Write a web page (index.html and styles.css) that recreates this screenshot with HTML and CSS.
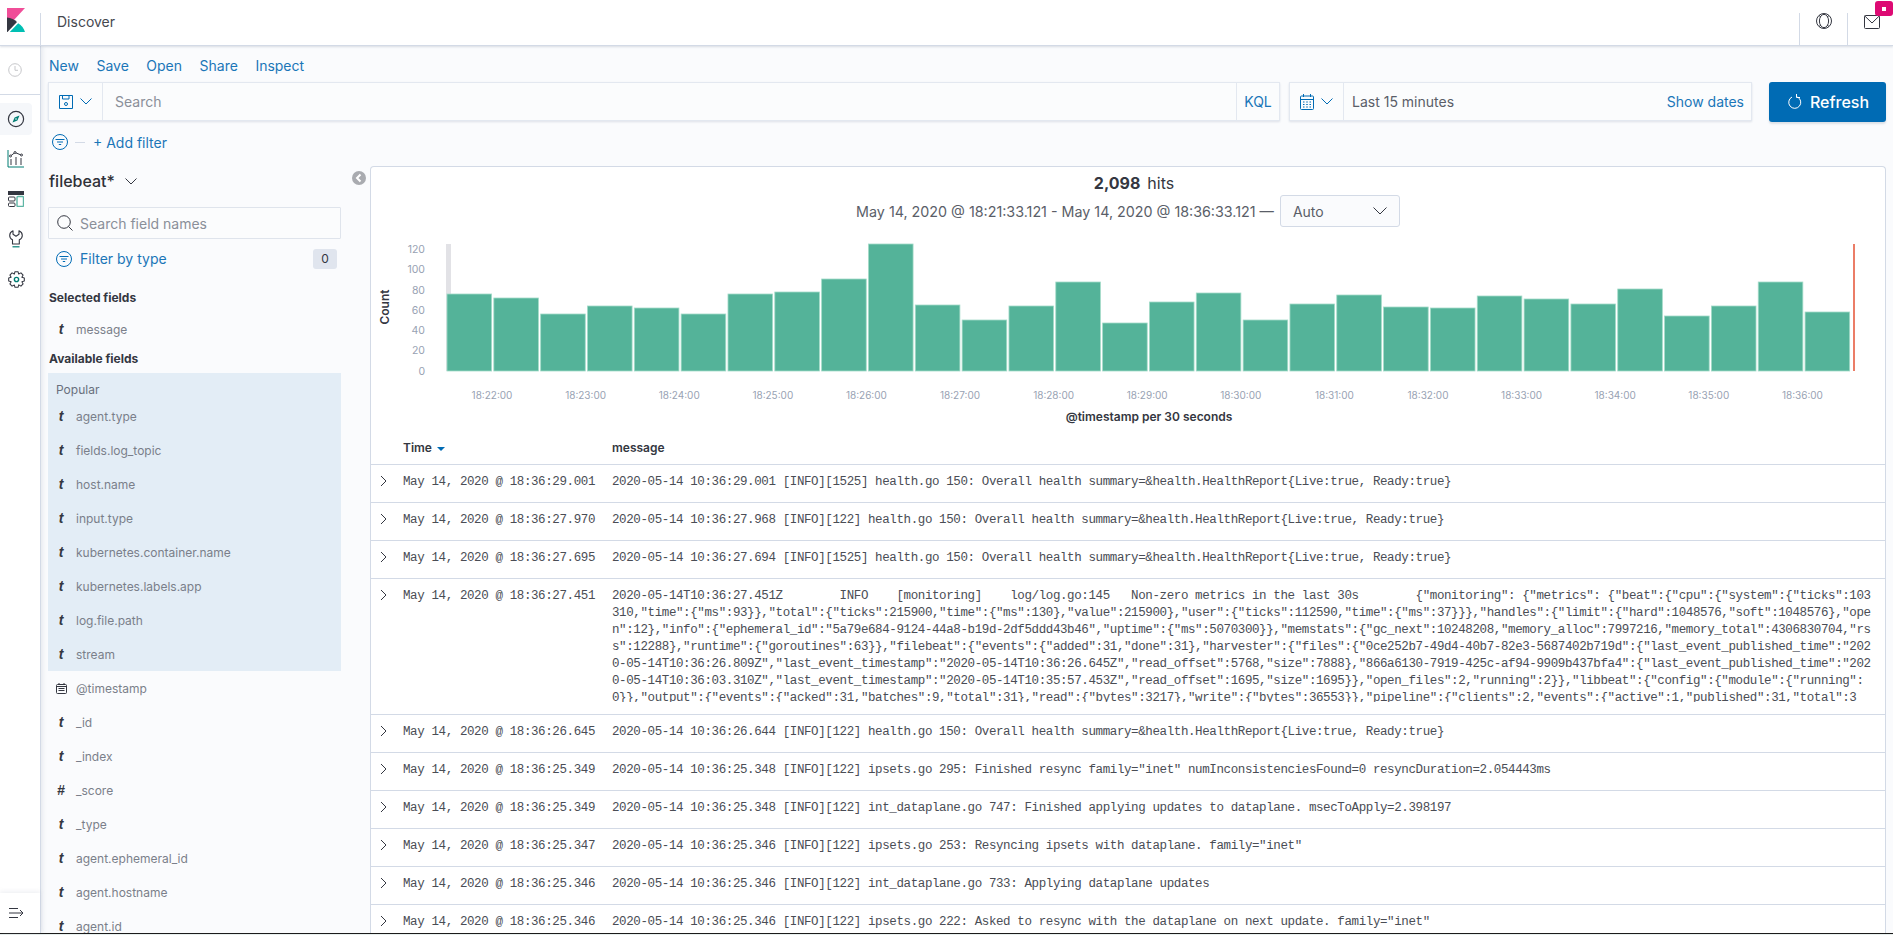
FILE: index.html
```html
<!DOCTYPE html>
<html lang="en">
<head>
<meta charset="utf-8">
<title>Discover - Kibana</title>
<link rel="stylesheet" href="styles.css">
</head>
<body>
<div class="app">
  <header class="topbar">
    <div class="logo-cell">
      <svg class="logo" width="18" height="24" viewBox="0 0 18 24"><path fill="#f04e98" d="M0 0H18L0 19.5Z"/><path fill="#343741" d="M0 9.5C4 9.8 7.5 11.5 10 14L0 24.5Z"/><path fill="#00bfb3" d="M11.2 15.2C14.6 17.3 17 20.4 18 24H2.8Z"/></svg>
    </div>
    <div class="crumb">Discover</div>
    <div class="head-cell">
      <svg width="18" height="18" viewBox="0 0 18 18" fill="none" stroke="#343741"><circle cx="9" cy="9" r="7.5"/><ellipse cx="9" cy="9" rx="4.6" ry="6.6"/><path d="M4 3.5 6 5M14 3.5 12 5M4 14.5 6 13M14 14.5 12 13"/></svg>
    </div>
    <div class="head-cell head-last">
      <svg width="16" height="14" viewBox="0 0 16 14" fill="none" stroke="#343741"><rect x=".5" y=".5" width="15" height="13" rx="1"/><path d="M.8 1 8 8l7.2-7"/></svg>
      <span class="badge"><i></i></span>
    </div>
  </header>

  <div class="workspace">
    <nav class="sidenav">
      <div class="recent">
        <svg width="14" height="14" viewBox="0 0 14 14" fill="none" stroke="#c6c7ca"><circle cx="7" cy="7" r="6.3"/><path d="M7 3v4.3h3"/></svg>
      </div>
      <div class="nav-list">
        <a class="nav-item is-active">
          <svg width="18" height="18" viewBox="0 0 18 18" fill="none"><circle cx="9" cy="9" r="7.6" stroke="#343741" stroke-width="1.2"/><path d="M5.5 12.5 7.6 7.6 12.5 5.5 10.4 10.4Z" fill="#017d73"/><circle cx="9" cy="9" r=".8" fill="#fff"/></svg>
        </a>
        <a class="nav-item">
          <svg width="18" height="18" viewBox="0 0 18 18" fill="none"><path d="M1 0v17h16" stroke="#017d73"/><path d="M4 15V9M9 15V7M14 15V8" stroke="#343741"/><path d="M3.5 6 8 2.5l6 2.5" stroke="#343741"/><circle cx="3.5" cy="6" r="1" fill="#fff" stroke="#343741"/><circle cx="8" cy="2.5" r="1" fill="#fff" stroke="#343741"/><circle cx="14.5" cy="5" r="1" fill="#fff" stroke="#343741"/></svg>
        </a>
        <a class="nav-item">
          <svg width="16" height="16" viewBox="0 0 16 16" fill="none"><rect x=".5" y=".5" width="15" height="3" fill="#343741" stroke="#343741"/><rect x="9" y="5.5" width="6.5" height="10" rx="1" stroke="#5fb6a5" stroke-width="1.4"/><rect x=".5" y="6" width="6.5" height="4" rx="1" stroke="#343741"/><rect x=".5" y="12" width="6.5" height="3.5" rx="1" stroke="#343741"/></svg>
        </a>
        <a class="nav-item">
          <svg width="14" height="18" viewBox="0 0 14 18" fill="none"><path d="M4 .8C1.8 1.8.7 3.5.7 5.4c0 2 1.2 3.5 2.8 4.3V14h6.8V9.7c1.800-.8 3-2.300 3-4.300 0-1.900-1.100-3.600-3.300-4.600v3.500L7 6.200 4 4.300Z" stroke="#343741" stroke-width="1.100" stroke-linejoin="round"/><path d="M3.500 16.800h7" stroke="#017d73" stroke-width="1.200"/></svg>
        </a>
        <a class="nav-item">
          <svg width="17" height="17" viewBox="0 0 16 16" fill="none"><path stroke="#343741" stroke-linejoin="round" d="M5.940 2.900 6.570.64H9.430L10.060 2.900 12.190 1.780 14.220 3.810 13.060 5.850 15.360 6.570V9.430L13.100 10.060 14.220 12.190 12.190 14.220 10.150 13.060 9.430 15.360H6.570L5.940 13.100 3.810 14.220 1.780 12.190 2.940 10.150.64 9.430V6.570L2.900 5.940 1.780 3.810 3.810 1.780Z"/><circle cx="8" cy="8" r="2" stroke="#017d73" stroke-width="1.300"/></svg>
        </a>
      </div>
      <div class="nav-toggle">
        <svg width="15" height="10" viewBox="0 0 15 10" fill="none" stroke="#343741"><path d="M0 .5h9M0 5h14M0 9.500h9M11 2l3 3-3 3"/></svg>
      </div>
    </nav>

    <main class="main">
      <div class="menu">
        <a>New</a><a>Save</a><a>Open</a><a>Share</a><a>Inspect</a>
      </div>

      <div class="query-row">
        <div class="searchbar">
          <div class="prepend">
            <svg width="14" height="14" viewBox="0 0 14 14" fill="none" stroke="#006bb4"><path d="M.5.5h13v13H.500Z"/><path d="M3.500.5v3.500h6.500V.5"/><circle cx="7" cy="9" r="1.500"/></svg>
            <svg class="chev" width="12" height="7" viewBox="0 0 12 7" fill="none" stroke="#006bb4"><path d="M.5.5 6 6l5.500-5.500"/></svg>
          </div>
          <div class="search-text">Search</div>
          <div class="kql">KQL</div>
        </div>
        <div class="datebar">
          <div class="prepend prepend-date">
            <svg width="14" height="16" viewBox="0 0 14 16" fill="none" stroke="#006bb4"><rect x=".5" y="2" width="13" height="13.500" rx="1"/><path d="M.5 5.500h13M3.500 0v3M10.500 0v3M3 8h1.500M6.250 8h1.500M9.500 8H11M3 10.500h1.500M6.250 10.500h1.500M9.500 10.500H11M3 13h1.500M6.250 13h1.500M9.500 13H11"/></svg>
            <svg class="chev" width="12" height="7" viewBox="0 0 12 7" fill="none" stroke="#006bb4"><path d="M.5.5 6 6l5.500-5.500"/></svg>
          </div>
          <div class="date-text">Last 15 minutes</div>
          <a class="show-dates">Show dates</a>
        </div>
        <button class="refresh">
          <svg width="14" height="16" viewBox="0 0 14 16" fill="none" stroke="#fff"><path d="M9.500 3A6 6 0 1 1 4 3"/><path d="M8.500 0v3.500H12"/></svg>
          <span>Refresh</span>
        </button>
      </div>

      <div class="filter-row">
        <svg width="16" height="16" viewBox="0 0 16 16" fill="none" stroke="#006bb4"><circle cx="8" cy="8" r="7.500"/><path d="M3.500 5.500h9M5 8h6M6.800 10.500h2.400"/></svg>
        <span class="dash"></span>
        <a class="add-filter">+ Add filter</a>
      </div>

      <div class="content">
        <aside class="fields">
          <div class="index-name">filebeat*
            <svg width="12" height="7" viewBox="0 0 12 7" fill="none" stroke="#343741"><path d="M.5.5 6 6l5.500-5.500"/></svg>
          </div>
          <div class="field-search">
            <svg width="16" height="16" viewBox="0 0 16 16" fill="none" stroke="#343741"><circle cx="7" cy="7" r="6.300"/><path d="m11.500 11.500 4 4"/></svg>
            <span>Search field names</span>
          </div>
          <div class="filter-type">
            <svg width="16" height="16" viewBox="0 0 16 16" fill="none" stroke="#006bb4"><circle cx="8" cy="8" r="7.500"/><path d="M3.500 5.500h9M5 8h6M6.800 10.500h2.400"/></svg>
            <a>Filter by type</a>
            <span class="count">0</span>
          </div>
          <div class="section-title first">Selected fields</div>
          <div class="field"><i>t</i><span>message</span></div>
          <div class="section-title second">Available fields</div>
          <div class="popular">
            <div class="popular-label">Popular</div>
            <div class="field"><i>t</i><span>agent.type</span></div>
            <div class="field"><i>t</i><span>fields.log_topic</span></div>
            <div class="field"><i>t</i><span>host.name</span></div>
            <div class="field"><i>t</i><span>input.type</span></div>
            <div class="field"><i>t</i><span>kubernetes.container.name</span></div>
            <div class="field"><i>t</i><span>kubernetes.labels.app</span></div>
            <div class="field"><i>t</i><span>log.file.path</span></div>
            <div class="field"><i>t</i><span>stream</span></div>
          </div>
          <div class="field"><i><svg width="11" height="11" viewBox="0 0 11 11" fill="none" stroke="#343741"><rect x=".5" y="1.500" width="10" height="9" rx="1"/><path d="M.5 3.500h10M3 0v2M8 0v2M2.500 5.500h6M2.500 7.500h6"/></svg></i><span>@timestamp</span></div>
          <div class="field"><i>t</i><span>_id</span></div>
          <div class="field"><i>t</i><span>_index</span></div>
          <div class="field"><i>#</i><span>_score</span></div>
          <div class="field"><i>t</i><span>_type</span></div>
          <div class="field"><i>t</i><span>agent.ephemeral_id</span></div>
          <div class="field"><i>t</i><span>agent.hostname</span></div>
          <div class="field"><i>t</i><span>agent.id</span></div>
        </aside>

        <span class="collapse">
          <svg width="14" height="14" viewBox="0 0 14 14"><circle cx="7" cy="7" r="7" fill="#a9abb0"/><path d="M8.500 3.500 5 7l3.500 3.500" fill="none" stroke="#fff" stroke-width="2"/></svg>
        </span>

        <section class="panel">
          <div class="hits"><b>2,098</b><span>hits</span></div>
          <div class="range">
            <span>May 14, 2020 @ 18:21:33.121 - May 14, 2020 @ 18:36:33.121 —</span>
            <div class="interval">Auto
              <svg width="14" height="8" viewBox="0 0 14 8" fill="none" stroke="#343741"><path d="M.5.500 7 7l6.500-6.500"/></svg>
            </div>
          </div>

          <svg class="chart" width="1514" height="204" viewBox="371 227 1514 204">
            <rect x="446" y="244" width="5" height="127" fill="#e2e2e6"/>
            <g class="bars">
              <rect x="447" y="294" width="44.600" height="77"/><rect x="493.830" y="298" width="44.600" height="73"/><rect x="540.660" y="314" width="44.600" height="57"/><rect x="587.490" y="306" width="44.600" height="65"/><rect x="634.320" y="308" width="44.600" height="63"/><rect x="681.150" y="314" width="44.600" height="57"/><rect x="727.980" y="294" width="44.600" height="77"/><rect x="774.810" y="292" width="44.600" height="79"/><rect x="821.640" y="279" width="44.600" height="92"/><rect x="868.470" y="244" width="44.600" height="127"/><rect x="915.300" y="305" width="44.600" height="66"/><rect x="962.130" y="320" width="44.600" height="51"/><rect x="1008.960" y="306" width="44.600" height="65"/><rect x="1055.790" y="282" width="44.600" height="89"/><rect x="1102.620" y="323" width="44.600" height="48"/><rect x="1149.450" y="302" width="44.600" height="69"/><rect x="1196.280" y="293" width="44.600" height="78"/><rect x="1243.110" y="320" width="44.600" height="51"/><rect x="1289.940" y="304" width="44.600" height="67"/><rect x="1336.770" y="295" width="44.600" height="76"/><rect x="1383.600" y="307" width="44.600" height="64"/><rect x="1430.430" y="308" width="44.600" height="63"/><rect x="1477.260" y="296" width="44.600" height="75"/><rect x="1524.090" y="299" width="44.600" height="72"/><rect x="1570.920" y="304" width="44.600" height="67"/><rect x="1617.750" y="289" width="44.600" height="82"/><rect x="1664.580" y="316" width="44.600" height="55"/><rect x="1711.410" y="306" width="44.600" height="65"/><rect x="1758.240" y="282" width="44.600" height="89"/><rect x="1805.070" y="312" width="44.600" height="59"/>
            </g>
            <rect x="1853" y="244" width="2" height="127" fill="#e7664c" opacity=".85"/>
            <g class="y-ticks">
              <text x="425" y="253">120</text><text x="425" y="273">100</text><text x="425" y="293.500">80</text><text x="425" y="314">60</text><text x="425" y="334">40</text><text x="425" y="354">20</text><text x="425" y="374.500">0</text>
            </g>
            <g class="x-ticks">
              <text x="492" y="399">18:22:00</text><text x="585.600" y="399">18:23:00</text><text x="679.200" y="399">18:24:00</text><text x="772.800" y="399">18:25:00</text><text x="866.400" y="399">18:26:00</text><text x="960" y="399">18:27:00</text><text x="1053.600" y="399">18:28:00</text><text x="1147.200" y="399">18:29:00</text><text x="1240.800" y="399">18:30:00</text><text x="1334.400" y="399">18:31:00</text><text x="1428" y="399">18:32:00</text><text x="1521.600" y="399">18:33:00</text><text x="1615.200" y="399">18:34:00</text><text x="1708.800" y="399">18:35:00</text><text x="1802.400" y="399">18:36:00</text>
            </g>
            <text class="axis-title" x="1149" y="421">@timestamp per 30 seconds</text>
            <text class="axis-title" transform="translate(389 307) rotate(-90)">Count</text>
          </svg>

          <table class="docs">
            <colgroup><col class="col-toggle"><col class="col-time"><col></colgroup>
            <thead>
              <tr><th></th><th>Time <span class="caret"></span></th><th>message</th></tr>
            </thead>
            <tbody>
              <tr><td class="tog"><svg width="7" height="12" viewBox="0 0 7 12" fill="none" stroke="#343741"><path d="m1 1 5 5-5 5"/></svg></td><td>May 14, 2020 @ 18:36:29.001</td><td>2020-05-14 10:36:29.001 [INFO][1525] health.go 150: Overall health summary=&amp;health.HealthReport{Live:true, Ready:true}</td></tr>
              <tr><td class="tog"><svg width="7" height="12" viewBox="0 0 7 12" fill="none" stroke="#343741"><path d="m1 1 5 5-5 5"/></svg></td><td>May 14, 2020 @ 18:36:27.970</td><td>2020-05-14 10:36:27.968 [INFO][122] health.go 150: Overall health summary=&amp;health.HealthReport{Live:true, Ready:true}</td></tr>
              <tr><td class="tog"><svg width="7" height="12" viewBox="0 0 7 12" fill="none" stroke="#343741"><path d="m1 1 5 5-5 5"/></svg></td><td>May 14, 2020 @ 18:36:27.695</td><td>2020-05-14 10:36:27.694 [INFO][1525] health.go 150: Overall health summary=&amp;health.HealthReport{Live:true, Ready:true}</td></tr>
              <tr><td class="tog"><svg width="7" height="12" viewBox="0 0 7 12" fill="none" stroke="#343741"><path d="m1 1 5 5-5 5"/></svg></td><td>May 14, 2020 @ 18:36:27.451</td><td><div class="truncated"><span>2020-05-14T10:36:27.451Z        INFO    [monitoring]    log/log.go:145   Non-zero metrics in the last 30s        {"monitoring": {"metrics": {"beat":{"cpu":{"system":{"ticks":103</span><span>310,"time":{"ms":93}},"total":{"ticks":215900,"time":{"ms":130},"value":215900},"user":{"ticks":112590,"time":{"ms":37}}},"handles":{"limit":{"hard":1048576,"soft":1048576},"ope</span><span>n":12},"info":{"ephemeral_id":"5a79e684-9124-44a8-b19d-2df5ddd43b46","uptime":{"ms":5070300}},"memstats":{"gc_next":10248208,"memory_alloc":7997216,"memory_total":4306830704,"rs</span><span>s":12288},"runtime":{"goroutines":63}},"filebeat":{"events":{"added":31,"done":31},"harvester":{"files":{"0ce252b7-49d4-40b7-82e3-5687402b719d":{"last_event_published_time":"202</span><span>0-05-14T10:36:26.809Z","last_event_timestamp":"2020-05-14T10:36:26.645Z","read_offset":5768,"size":7888},"866a6130-7919-425c-af94-9909b437bfa4":{"last_event_published_time":"202</span><span>0-05-14T10:36:03.310Z","last_event_timestamp":"2020-05-14T10:35:57.453Z","read_offset":1695,"size":1695}},"open_files":2,"running":2}},"libbeat":{"config":{"module":{"running":</span><span>0}},"output":{"events":{"acked":31,"batches":9,"total":31},"read":{"bytes":3217},"write":{"bytes":36553}},"pipeline":{"clients":2,"events":{"active":1,"published":31,"total":3</span></div></td></tr>
              <tr><td class="tog"><svg width="7" height="12" viewBox="0 0 7 12" fill="none" stroke="#343741"><path d="m1 1 5 5-5 5"/></svg></td><td>May 14, 2020 @ 18:36:26.645</td><td>2020-05-14 10:36:26.644 [INFO][122] health.go 150: Overall health summary=&amp;health.HealthReport{Live:true, Ready:true}</td></tr>
              <tr><td class="tog"><svg width="7" height="12" viewBox="0 0 7 12" fill="none" stroke="#343741"><path d="m1 1 5 5-5 5"/></svg></td><td>May 14, 2020 @ 18:36:25.349</td><td>2020-05-14 10:36:25.348 [INFO][122] ipsets.go 295: Finished resync family="inet" numInconsistenciesFound=0 resyncDuration=2.054443ms</td></tr>
              <tr><td class="tog"><svg width="7" height="12" viewBox="0 0 7 12" fill="none" stroke="#343741"><path d="m1 1 5 5-5 5"/></svg></td><td>May 14, 2020 @ 18:36:25.349</td><td>2020-05-14 10:36:25.348 [INFO][122] int_dataplane.go 747: Finished applying updates to dataplane. msecToApply=2.398197</td></tr>
              <tr><td class="tog"><svg width="7" height="12" viewBox="0 0 7 12" fill="none" stroke="#343741"><path d="m1 1 5 5-5 5"/></svg></td><td>May 14, 2020 @ 18:36:25.347</td><td>2020-05-14 10:36:25.346 [INFO][122] ipsets.go 253: Resyncing ipsets with dataplane. family="inet"</td></tr>
              <tr><td class="tog"><svg width="7" height="12" viewBox="0 0 7 12" fill="none" stroke="#343741"><path d="m1 1 5 5-5 5"/></svg></td><td>May 14, 2020 @ 18:36:25.346</td><td>2020-05-14 10:36:25.346 [INFO][122] int_dataplane.go 733: Applying dataplane updates</td></tr>
              <tr><td class="tog"><svg width="7" height="12" viewBox="0 0 7 12" fill="none" stroke="#343741"><path d="m1 1 5 5-5 5"/></svg></td><td>May 14, 2020 @ 18:36:25.346</td><td>2020-05-14 10:36:25.346 [INFO][122] ipsets.go 222: Asked to resync with the dataplane on next update. family="inet"</td></tr>
            </tbody>
          </table>
        </section>
      </div>
    </main>
  </div>
  <div class="screen-edge"></div>
</div>
</body>
</html>
```

FILE: styles.css
```css
* { box-sizing: border-box; }
html, body { margin: 0; height: 100%; overflow: hidden; }
body { font-family: Inter, "Liberation Sans", sans-serif; font-size: 14px; color: #343741; background: #fff; }
svg { display: block; flex: none; }
a { color: #1a76b8; }

.app { height: 935px; display: flex; flex-direction: column; }

.topbar { height: 46px; flex: none; display: flex; background: #fff; border-bottom: 1px solid #d3dae6; box-shadow: 0 1px 2px rgba(152,162,179,.35); position: relative; z-index: 3; overflow: hidden; }
.logo-cell { width: 41px; flex: none; padding: 8px 0 0 7px; position: relative; }
.logo-cell::after { content: ""; position: absolute; right: 0; top: 13px; bottom: 0; width: 1px; background: #d3dae6; }
.crumb { flex: 1; padding: 13px 0 0 16px; line-height: 17px; font-size: 14px; color: #45484f; }
.head-cell { width: 48px; flex: none; margin-top: 13px; border-left: 1px solid #d3dae6; display: flex; justify-content: center; position: relative; }
.head-cell svg { margin-top: -1px; }
.head-last { margin-right: -2px; }
.head-last svg { margin-top: 2px; }
.badge { position: absolute; left: 27px; top: -12px; width: 18px; height: 15px; border-radius: 3px; background: #dd0a73; display: flex; align-items: center; justify-content: center; }
.badge i { width: 4px; height: 4px; background: #fff; }

.workspace { flex: 1; min-height: 0; display: flex; }

.sidenav { width: 41px; flex: none; display: flex; flex-direction: column; background: #fff; border-right: 1px solid #d3dae6; box-shadow: 2px 0 4px rgba(152,162,179,.18); position: relative; z-index: 2; }
.recent { height: 49px; flex: none; border-bottom: 1px solid #d3dae6; display: flex; align-items: center; padding-left: 8px; margin-right: -1px; }
.nav-list { display: flex; flex-direction: column; gap: 8px; padding-top: 8px; }
.nav-item { width: 32px; height: 32px; display: flex; align-items: center; justify-content: center; border-radius: 0 4px 4px 0; }
.nav-item.is-active { background: #f5f7fa; }
.nav-toggle { margin-top: auto; height: 40px; display: flex; align-items: center; padding-left: 9px; box-shadow: 0 -2px 4px rgba(152,162,179,.15); }

.main { flex: 1; min-width: 0; display: flex; flex-direction: column; background: #fafbfd; }

.menu { height: 36px; flex: none; display: flex; gap: 17.5px; padding: 11px 0 0 8px; line-height: 18px; font-size: 14px; }

.query-row { height: 40px; flex: none; display: flex; padding: 0 7px; }
.searchbar, .datebar { height: 39px; display: flex; align-items: center; background: #fbfcfd; border: 1px solid #e3e8f0; box-shadow: 0 1px 2px rgba(152,162,179,.28); }
.searchbar { flex: 1; min-width: 0; margin-right: 9px; }
.datebar { width: 463px; flex: none; margin-right: 17px; }
.prepend { height: 100%; width: 54px; flex: none; display: flex; align-items: center; padding-left: 10px; gap: 7px; border-right: 1px solid #e3e8f0; }
.search-text { flex: 1; padding-left: 12px; color: #8a8f99; font-size: 14px; }
.kql { width: 43px; flex: none; height: 100%; display: flex; align-items: center; justify-content: center; border-left: 1px solid #e3e8f0; color: #1a76b8; font-size: 14px; }
.date-text { flex: 1; padding-left: 8px; color: #5a5e68; font-size: 14px; }
.show-dates { padding-right: 7px; font-size: 14px; }
.refresh { width: 117px; height: 40px; flex: none; border: 0; border-radius: 3px; background: #006bb4; color: #fff; font: 500 16px Inter, sans-serif; display: flex; align-items: center; justify-content: center; gap: 8px; box-shadow: 0 2px 2px rgba(152,162,179,.3); padding: 0 0 0 2px; }

.filter-row { height: 40px; flex: none; display: flex; align-items: center; padding-left: 11px; }
.dash { width: 10px; height: 1px; background: #d3dae6; margin: 0 8px 0 7px; }
.add-filter { font-size: 14px; }

.content { flex: 1; min-height: 0; display: flex; padding: 0 7px; position: relative; overflow: hidden; }
.fields { width: 293px; flex: none; }
.collapse { position: absolute; left: 311px; top: 9px; }

.index-name { height: 38px; margin-bottom: 7px; display: flex; align-items: center; gap: 10px; padding-left: 1px; font-size: 16px; font-weight: 500; color: #2f3138; }
.field-search { height: 32px; display: flex; align-items: center; gap: 7px; padding-left: 8px; background: #fbfcfd; border: 1px solid #dfe4ec; border-radius: 1px; color: #8a8f99; font-size: 14px; }
.filter-type { height: 40px; display: flex; align-items: center; gap: 8px; padding: 0 4px 1px 8px; }
.filter-type a { flex: 1; }
.count { width: 24px; height: 20px; border-radius: 3px; background: #e0e5ee; display: flex; align-items: center; justify-content: center; font-size: 12px; }
.section-title { font-size: 12px; font-weight: 700; line-height: 18px; padding-left: 1px; color: #343741; }
.section-title.first { height: 33px; padding-top: 10px; }
.section-title.second { height: 27px; padding-top: 4px; }

.popular { background: #e3edf6; }
.popular-label { height: 26px; padding: 8px 0 0 8px; line-height: 18px; font-size: 12px; color: #69707d; }
.field { height: 34px; display: flex; align-items: center; gap: 5px; padding-left: 3px; font-size: 12px; color: #7a7f8a; }
.field i { width: 20px; display: flex; justify-content: center; font: italic 700 14px "Liberation Sans", sans-serif; color: #343741; }

.panel { width: 1516px; flex: none; margin: 4px 0 0 29px; background: #fff; border: 1px solid #d3dae6; border-bottom: 0; border-radius: 4px 4px 0 0; }
.hits { height: 25px; padding: 6px 0 0 12px; display: flex; justify-content: center; align-items: center; gap: 7px; font-size: 16px; line-height: 20px; color: #343741; }
.hits b { font-weight: 700; }
.range { height: 32px; margin-top: 3px; display: flex; justify-content: center; align-items: center; gap: 6px; font-size: 14.3px; color: #5a5e68; }
.interval { width: 120px; height: 32px; display: flex; align-items: center; justify-content: space-between; padding: 0 12px; font-size: 14px; background: #fafbfd; border: 1px solid #d3dae6; border-radius: 3px; color: #5a5e68; }

.chart { width: 1514px; height: 204px; }
.bars rect { fill: #54b399; stroke: #a3dbc8; stroke-width: .8; }
.y-ticks text { font-size: 10.5px; fill: #98a2b3; text-anchor: end; }
.x-ticks text { font-size: 10px; fill: #98a2b3; text-anchor: middle; }
.axis-title { font-size: 12px; font-weight: 600; fill: #343741; text-anchor: middle; }

.docs { width: 1514px; table-layout: fixed; border-collapse: collapse; }
.col-toggle { width: 32px; }
.col-time { width: 209px; }
.docs th { height: 33px; padding: 0; text-align: left; font-size: 12px; font-weight: 600; color: #343741; border-bottom: 1px solid #d3dae6; }
.caret { display: inline-block; width: 0; height: 0; margin: 0 0 1px 2px; border: 4px solid transparent; border-top-color: #006bb4; border-bottom: 0; }
.docs td { padding: 9px 0 11px; vertical-align: top; font: 12.5px/17px "Liberation Mono", monospace; letter-spacing: -.39px; color: #4a4d55; white-space: pre; border-bottom: 1px solid #d3dae6; overflow: hidden; }
.docs .tog { padding: 10px 0 0 9px; }
.truncated { height: 114px; margin-bottom: 1px; overflow: hidden; }
.truncated span { display: block; }

.screen-edge { height: 2px; flex: none; border-top: 1px solid #1b1b1b; background: #e8f0ee; }
```
